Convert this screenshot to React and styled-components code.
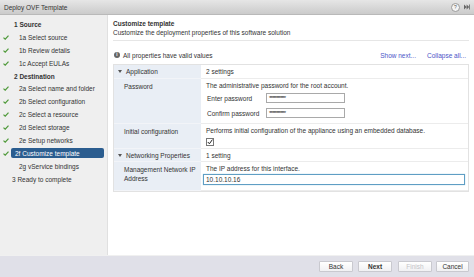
import React from "react";
import styled, { createGlobalStyle } from "styled-components";

const GlobalStyle = createGlobalStyle`
  html, body {
    margin: 0;
    padding: 0;
    background: #fff;
  }
  body {
    font-family: "Liberation Sans", Arial, sans-serif;
    font-size: 6.5px;
    color: #333;
  }
`;

const Window = styled.div`
  width: 474px;
  height: 277px;
  display: flex;
  flex-direction: column;
  overflow: hidden;
`;

const TitleBar = styled.div`
  height: 15px;
  flex: none;
  display: flex;
  align-items: center;
  justify-content: space-between;
  padding: 0 4px 0 4px;
  background: linear-gradient(#e6e6e6, #cbcbcb);
  border-bottom: 1px solid #b9b9b9;
  box-sizing: border-box;
  font-size: 6.5px;
  color: #333;
`;

const TitleIcons = styled.div`
  display: flex;
  align-items: center;
  gap: 4px;
`;

const HelpIcon = styled.span`
  width: 7px;
  height: 7px;
  border-radius: 50%;
  background: #f4f4f4;
  border: 1px solid #9a9a9a;
  font-size: 5px;
  line-height: 7px;
  text-align: center;
  color: #555;
`;

const Body = styled.div`
  flex: 1;
  display: flex;
  min-height: 0;
`;

const Sidebar = styled.div`
  width: 108px;
  flex: none;
  background: #efefef;
  border-right: 1px solid #e0e0e0;
  box-sizing: border-box;
  padding-top: 3px;
`;

const Step = styled.div`
  height: 12.9px;
  display: flex;
  align-items: center;
  position: relative;
  padding-left: ${(p) => (p.$level === 0 ? 14 : 19)}px;
  font-weight: ${(p) => (p.$level === 0 ? "bold" : "normal")};
  color: #333;
`;

const StepLabel = styled.span`
  display: flex;
  align-items: center;
  height: 10px;
  padding: 0 4px 0 ${(p) => (p.$active ? 4 : 0)}px;
  margin-left: ${(p) => (p.$active ? -8 : 0)}px;
  flex: ${(p) => (p.$active ? 1 : "none")};
  margin-right: ${(p) => (p.$active ? 3 : 0)}px;
  background: ${(p) => (p.$active ? "#2b5d8f" : "transparent")};
  color: ${(p) => (p.$active ? "#fff" : "inherit")};
  border-radius: 2px;
`;

const Check = styled.svg`
  position: absolute;
  left: 3px;
  top: 4px;
`;

const Main = styled.div`
  flex: 1;
  padding: 4px 7px 0 5px;
  display: flex;
  flex-direction: column;
`;

const Heading = styled.div`
  font-weight: bold;
  font-size: 6.5px;
  line-height: 9px;
`;

const SubHeading = styled.div`
  line-height: 9px;
  padding-bottom: 3px;
  border-bottom: 1px solid #e6e6e6;
`;

const InfoRow = styled.div`
  display: flex;
  align-items: center;
  height: 12px;
  margin-top: 8px;
  gap: 3px;
  padding-left: 1px;
`;

const InfoIcon = styled.span`
  width: 6px;
  height: 6px;
  border-radius: 50%;
  background: #666;
  color: #fff;
  font-size: 4.5px;
  font-weight: bold;
  line-height: 6px;
  text-align: center;
`;

const Links = styled.div`
  margin-left: auto;
  display: flex;
  gap: 11px;
  padding-right: 3px;
`;

const Link = styled.span`
  color: #4a55c8;
`;

const Table = styled.div`
  margin-top: 3px;
  border: 1px solid #e2e2e2;
  display: grid;
  grid-template-columns: 87px 1fr;
`;

const LabelCell = styled.div`
  background: #e9eef5;
  padding: ${(p) => (p.$group ? "0 0 0 4px" : "3px 4px 0 10px")};
  height: ${(p) => p.$h}px;
  box-sizing: border-box;
  display: flex;
  align-items: ${(p) => (p.$group ? "center" : "flex-start")};
  gap: 4px;
  line-height: 9px;
  border-bottom: 1px solid #f2f4f8;
`;

const ValueCell = styled.div`
  padding: ${(p) => (p.$group ? "0 0 0 5px" : "2px 3px 0 5px")};
  height: ${(p) => p.$h}px;
  box-sizing: border-box;
  display: flex;
  flex-direction: column;
  justify-content: ${(p) => (p.$group ? "center" : "flex-start")};
  line-height: 9px;
  border-bottom: 1px solid #ececec;
`;

const FieldRow = styled.div`
  display: flex;
  align-items: center;
  margin-top: ${(p) => p.$mt || 0}px;
`;

const FieldLabel = styled.span`
  width: 59px;
  padding-left: 1px;
`;

const Input = styled.div`
  width: ${(p) => p.$w || "79px"};
  height: ${(p) => p.$hgt || 10}px;
  box-sizing: border-box;
  border: 1px solid ${(p) => (p.$focus ? "#5f9ec4" : "#a9a9a9")};
  box-shadow: ${(p) => (p.$focus ? "0 0 1px #9cc8e0" : "none")};
  background: #fff;
  display: flex;
  align-items: ${(p) => (p.$mask ? "flex-end" : "center")};
  padding-left: 2px;
  font-size: ${(p) => (p.$mask ? 6 : 6.5)}px;
  line-height: ${(p) => (p.$mask ? "8px" : "normal")};
  letter-spacing: ${(p) => (p.$mask ? "-1px" : 0)};
  color: #333;
`;

const Checkbox = styled.span`
  width: 6px;
  height: 6px;
  border: 1px solid #777;
  margin-top: 3px;
  display: flex;
  align-items: center;
  justify-content: center;
  background: #fff;
`;

const Footer = styled.div`
  height: 22px;
  flex: none;
  background: #e0e0e8;
  display: flex;
  align-items: center;
  justify-content: flex-end;
  gap: 5px;
  padding-right: 5px;
  border-top: 1px solid #f0f0f0;
  box-sizing: border-box;
`;

const Button = styled.div`
  width: ${(p) => (p.$narrow ? 33 : 34)}px;
  height: 11px;
  box-sizing: border-box;
  border: 1px solid #c9c9cf;
  border-radius: 1px;
  background: linear-gradient(#ffffff, #f1f1f3);
  display: flex;
  align-items: center;
  justify-content: center;
  font-weight: ${(p) => (p.$primary ? "bold" : "normal")};
  color: ${(p) => (p.$disabled ? "#c4c4c8" : "#333")};
  margin-left: ${(p) => p.$gapBefore || 0}px;
`;

const steps = [
  { t: "1 Source", level: 0 },
  { t: "1a Select source", done: true },
  { t: "1b Review details", done: true },
  { t: "1c Accept EULAs", done: true },
  { t: "2 Destination", level: 0 },
  { t: "2a Select name and folder", done: true },
  { t: "2b Select configuration", done: true },
  { t: "2c Select a resource", done: true },
  { t: "2d Select storage", done: true },
  { t: "2e Setup networks", done: true },
  { t: "2f Customize template", done: true, active: true },
  { t: "2g vService bindings" },
  { t: "3 Ready to complete", level: 0, plain: true },
];

const CheckMark = () => (
  <Check width="6" height="5" viewBox="0 0 6 5">
    <path d="M0.5 2.6 L2.2 4.2 L5.5 0.6" fill="none" stroke="#4f9a3a" strokeWidth="1.2" />
  </Check>
);

const Caret = () => (
  <svg width="4" height="3" viewBox="0 0 4 3">
    <path d="M0 0 L4 0 L2 3 Z" fill="#555" />
  </svg>
);

export default function App() {
  return (
    <>
      <GlobalStyle />
      <Window>
        <TitleBar>
          <span>Deploy OVF Template</span>
          <TitleIcons>
            <HelpIcon>?</HelpIcon>
            <svg width="6" height="6" viewBox="0 0 6 6">
              <path d="M0 0.5 L2.6 3 L0 5.5 Z M2.6 0.5 L5.2 3 L2.6 5.5 Z" fill="#666" />
              <rect x="5.2" y="0.5" width="0.8" height="5" fill="#666" />
            </svg>
          </TitleIcons>
        </TitleBar>
        <Body>
          <Sidebar>
            {steps.map((s) => (
              <Step
                key={s.t}
                $level={s.level === 0 ? 0 : 1}
                style={s.plain ? { fontWeight: "normal", paddingLeft: 12 } : undefined}
              >
                {s.done && <CheckMark />}
                <StepLabel $active={s.active}>{s.t}</StepLabel>
              </Step>
            ))}
          </Sidebar>
          <Main>
            <Heading>Customize template</Heading>
            <SubHeading>Customize the deployment properties of this software solution</SubHeading>
            <InfoRow>
              <InfoIcon>i</InfoIcon>
              <span>All properties have valid values</span>
              <Links>
                <Link>Show next...</Link>
                <Link>Collapse all...</Link>
              </Links>
            </InfoRow>
            <Table>
              <LabelCell $group $h={14}>
                <Caret />
                Application
              </LabelCell>
              <ValueCell $group $h={14}>2 settings</ValueCell>

              <LabelCell $h={45}>Password</LabelCell>
              <ValueCell $h={45}>
                <span>The administrative password for the root account.</span>
                <FieldRow $mt={3}>
                  <FieldLabel>Enter password</FieldLabel>
                  <Input $mask>************</Input>
                </FieldRow>
                <FieldRow $mt={5}>
                  <FieldLabel>Confirm password</FieldLabel>
                  <Input $mask>************</Input>
                </FieldRow>
              </ValueCell>

              <LabelCell $h={25}>Initial configuration</LabelCell>
              <ValueCell $h={25}>
                <span>Performs initial configuration of the appliance using an embedded database.</span>
                <Checkbox>
                  <svg width="6" height="6" viewBox="0 0 6 6">
                    <path d="M0.8 3 L2.4 4.8 L5.4 0.6" fill="none" stroke="#222" strokeWidth="1" />
                  </svg>
                </Checkbox>
              </ValueCell>

              <LabelCell $group $h={13}>
                <Caret />
                Networking Properties
              </LabelCell>
              <ValueCell $group $h={13}>1 setting</ValueCell>

              <LabelCell $h={29}>Management Network IP Address</LabelCell>
              <ValueCell $h={29}>
                <span>The IP address for this interface.</span>
                <FieldRow $mt={1}>
                  <Input $focus $w="262px" $hgt={11} style={{ marginLeft: -3 }}>
                    10.10.10.16
                  </Input>
                </FieldRow>
              </ValueCell>
            </Table>
          </Main>
        </Body>
        <Footer>
          <Button>Back</Button>
          <Button $primary>Next</Button>
          <Button $disabled $gapBefore={1}>Finish</Button>
          <Button $narrow $gapBefore={-1}>Cancel</Button>
        </Footer>
      </Window>
    </>
  );
}
